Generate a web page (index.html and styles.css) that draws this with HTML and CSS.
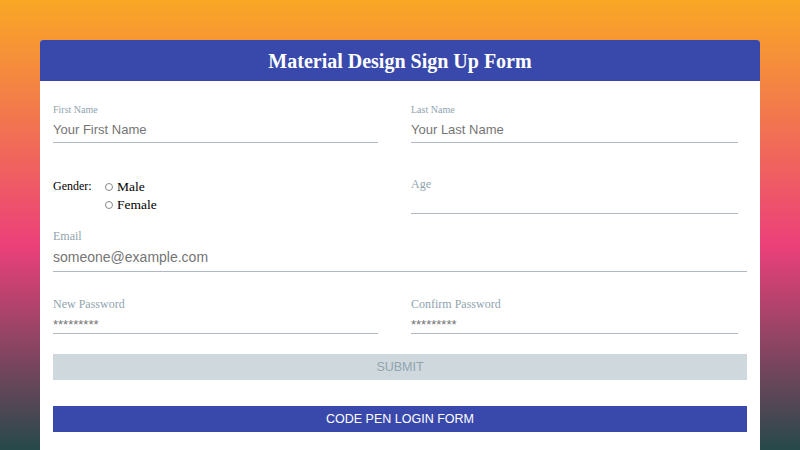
FILE: index.html
```html
<!DOCTYPE html>
<html lang="en">
<head>
<meta charset="utf-8">
<title>Material Design Sign Up Form</title>
<link rel="stylesheet" href="styles.css">
</head>
<body>
<div class="card">
  <div class="card-header"><h1 class="title">Material Design Sign Up Form</h1></div>
  <form class="card-body">
    <div class="row row-names">
      <div class="field field-left">
        <label class="label label-small">First Name</label>
        <input class="input input-name" type="text" placeholder="Your First Name">
      </div>
      <div class="field field-right">
        <label class="label label-small">Last Name</label>
        <input class="input input-name" type="text" placeholder="Your Last Name">
      </div>
    </div>
    <div class="row row-gender">
      <div class="gender field-left">
        <span class="gender-label">Gender:</span>
        <div class="radios">
          <label class="radio"><input class="radio-input" type="radio" name="g">Male</label>
          <label class="radio"><input class="radio-input" type="radio" name="g">Female</label>
        </div>
      </div>
      <div class="field field-right">
        <label class="label">Age</label>
        <input class="input input-age" type="text">
      </div>
    </div>
    <div class="field field-email">
      <label class="label">Email</label>
      <input class="input input-email" type="text" placeholder="someone@example.com">
    </div>
    <div class="row row-pass">
      <div class="field field-left">
        <label class="label">New Password</label>
        <input class="input input-pass" type="text" placeholder="*********">
      </div>
      <div class="field field-right">
        <label class="label">Confirm Password</label>
        <input class="input input-pass" type="text" placeholder="*********">
      </div>
    </div>
    <button class="btn btn-submit" type="button">SUBMIT</button>
    <button class="btn btn-codepen" type="button">CODE PEN LOGIN FORM</button>
  </form>
</div>
</body>
</html>
```
FILE: styles.css
```css
html, body {
  margin: 0;
  height: 100%;
}
body {
  background: linear-gradient(to bottom, #f9a825 0px, #ec407a 245px, #26494a 450px);
  padding-top: 40px;
  box-sizing: border-box;
  overflow: hidden;
  font-family: "Liberation Serif", "Times New Roman", serif;
}
.card {
  width: 720px;
  margin: 0 auto;
  background: #ffffff;
  border-radius: 3px 3px 0 0;
  height: 410px;
}
.card-header {
  height: 41px;
  background: #3949ab;
  border-radius: 3px 3px 0 0;
  display: flex;
  align-items: center;
  justify-content: center;
}
.title {
  margin: 0;
  color: #ffffff;
  font-size: 20px;
  font-weight: bold;
  font-family: "Liberation Serif", "Times New Roman", serif;
  line-height: 24px;
}
.card-body {
  margin: 0;
  padding: 0 13px;
  display: flex;
  flex-direction: column;
}
.row {
  display: flex;
}
.field {
  display: flex;
  flex-direction: column;
}
.field-left {
  width: 325px;
}
.field-right {
  width: 327px;
  margin-left: 33px;
}
.label {
  color: #90a4ae;
  font-size: 12px;
  line-height: 14px;
}
.label-small {
  font-size: 10px;
  line-height: 12px;
}
.input {
  border: none;
  border-bottom: 1px solid #b0b8c4;
  outline: none;
  padding: 0;
  margin: 0;
  background: transparent;
  font-family: "Liberation Sans", Arial, sans-serif;
  color: #757575;
  box-sizing: border-box;
  width: 100%;
}
.input::placeholder {
  color: #757575;
  opacity: 1;
}
.row-names {
  margin-top: 23px;
}
.input-name {
  height: 27px;
  font-size: 13px;
  padding-top: 1px;
}
.row-gender {
  margin-top: 34px;
}
.gender {
  display: flex;
  align-items: flex-start;
  color: #000000;
}
.gender-label {
  font-size: 12px;
  line-height: 14px;
  margin-top: 2px;
  width: 52px;
}
.radios {
  display: flex;
  flex-direction: column;
  margin-top: 1px;
}
.radio {
  display: flex;
  align-items: center;
  font-size: 13.5px;
  line-height: 18px;
}
.radio-input {
  appearance: none;
  -webkit-appearance: none;
  width: 8px;
  height: 8px;
  border: 1px solid #8a8a8a;
  border-radius: 50%;
  margin: 0 4px 0 0;
  box-sizing: border-box;
}
.input-age {
  height: 23px;
}
.field-email {
  margin-top: 15px;
}
.input-email {
  height: 29px;
  font-size: 14px;
}
.row-pass {
  margin-top: 25px;
}
.input-pass {
  height: 23px;
  font-size: 13px;
  padding-top: 4px;
}
.btn {
  border: none;
  height: 26px;
  width: 100%;
  font-family: "Liberation Sans", Arial, sans-serif;
  font-size: 12.5px;
  padding: 0;
}
.btn-submit {
  margin-top: 20px;
  background: #cfd8dc;
  color: #90a4ae;
}
.btn-codepen {
  margin-top: 26px;
  background: #3949ab;
  color: #ffffff;
}
```
